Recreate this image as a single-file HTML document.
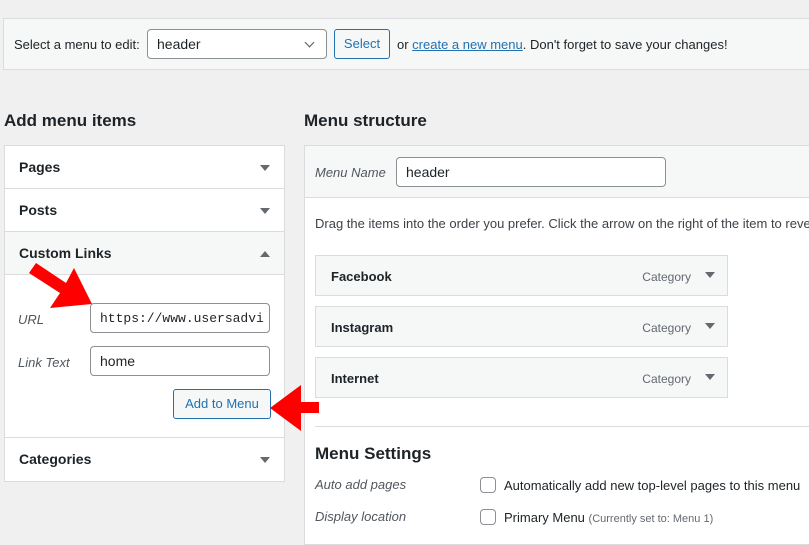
<!DOCTYPE html>
<html><head><style>
*{box-sizing:border-box;margin:0;padding:0}
body{width:809px;height:531px;background:#f0f0f1;font-family:"Liberation Sans",sans-serif;font-size:13px;color:#1d2327;position:relative;overflow:hidden}
.a{position:absolute}
.inp{position:absolute;background:#fff;border:1px solid #8c8f94;border-radius:4px;font-size:14px;padding-left:9px;display:flex;align-items:center}
.tri{position:absolute;width:0;height:0;border-left:5px solid transparent;border-right:5px solid transparent;border-top:6px solid #646970}
.row{position:absolute;left:0;width:279px;height:43px;border-bottom:1px solid #dcdcde;font-size:14px;font-weight:bold;padding:13px 14px}
.item{position:absolute;left:315px;width:413px;height:41px;background:#f6f7f7;border:1px solid #dcdcde;font-weight:bold;font-size:13px;padding:13px 15px}
.item span{position:absolute;right:36px;top:14px;font-weight:normal;color:#646970;font-size:12px}
.item i{position:absolute;right:12px;top:16px;border-left:5px solid transparent;border-right:5px solid transparent;border-top:6px solid #646970}
</style></head><body>
<div class="a" style="left:3px;top:18px;width:820px;height:52px;background:#f6f7f7;border:1px solid #dcdcde"></div>
<div class="a" style="left:14px;top:37px">Select a menu to edit:</div>
<div class="inp" style="left:147px;top:29px;width:180px;height:30px;">header</div>
<div class="a" style="left:306px;top:39px;width:7px;height:7px;border-right:1.5px solid #50575e;border-bottom:1.5px solid #50575e;transform:rotate(45deg)"></div>
<div class="a" style="left:334px;top:29px;width:56px;height:30px;border:1px solid #2271b1;border-radius:3px;background:#f6f7f7;color:#2271b1;text-align:center;line-height:28px">Select</div>
<div class="a" style="left:397px;top:37px">or <u style="color:#2271b1">create a new menu</u>. Don't forget to save your changes!</div>

<div class="a" style="left:4px;top:111px;font-size:17px;font-weight:bold">Add menu items</div>
<div class="a" style="left:304px;top:111px;font-size:17px;font-weight:bold">Menu structure</div>

<div class="a" style="left:4px;top:145px;width:281px;height:337px;background:#fff;border:1px solid #dcdcde">
 <div class="row" style="top:0">Pages<div class="tri" style="right:14px;top:19px"></div></div>
 <div class="row" style="top:43px">Posts<div class="tri" style="right:14px;top:19px"></div></div>
 <div class="row" style="top:86px;background:#f6f7f7">Custom Links<div class="tri" style="right:14px;top:19px;border-top:none;border-bottom:6px solid #646970"></div></div>
 <div class="row" style="top:291px;border-top:1px solid #dcdcde;border-bottom:none">Categories<div class="tri" style="right:14px;top:19px"></div></div>
</div>
<div class="a" style="left:18px;top:312px;font-style:italic;color:#50575e">URL</div>
<div class="inp" style="left:90px;top:303px;width:180px;height:30px;font-family:'Liberation Mono',monospace;font-size:13px">https://www.usersadvi</div>
<div class="a" style="left:18px;top:355px;font-style:italic;color:#50575e">Link Text</div>
<div class="inp" style="left:90px;top:346px;width:180px;height:30px">home</div>
<div class="a" style="left:173px;top:389px;width:98px;height:30px;border:1px solid #2271b1;border-radius:3px;background:#f6f7f7;color:#2271b1;text-align:center;line-height:28px">Add to Menu</div>

<div class="a" style="left:304px;top:145px;width:520px;height:400px;background:#fff;border:1px solid #dcdcde"></div>
<div class="a" style="left:305px;top:146px;width:520px;height:52px;background:#f6f7f7;border-bottom:1px solid #dcdcde"></div>
<div class="a" style="left:315px;top:165px;font-style:italic;color:#50575e">Menu Name</div>
<div class="inp" style="left:396px;top:157px;width:270px;height:30px">header</div>
<div class="a" style="left:315px;top:216px;white-space:nowrap;color:#3c434a">Drag the items into the order you prefer. Click the arrow on the right of the item to reveal</div>
<div class="item" style="top:255px">Facebook<span>Category</span><i></i></div>
<div class="item" style="top:306px">Instagram<span>Category</span><i></i></div>
<div class="item" style="top:357px">Internet<span>Category</span><i></i></div>
<div class="a" style="left:315px;top:426px;width:500px;border-top:1px solid #dcdcde"></div>
<div class="a" style="left:315px;top:444px;font-size:17px;font-weight:bold">Menu Settings</div>
<div class="a" style="left:315px;top:477px;font-style:italic;color:#50575e">Auto add pages</div>
<div class="a" style="left:315px;top:509px;font-style:italic;color:#50575e">Display location</div>
<div class="a" style="left:480px;top:477px;width:16px;height:16px;border:1px solid #8c8f94;border-radius:4px;background:#fff"></div>
<div class="a" style="left:480px;top:509px;width:16px;height:16px;border:1px solid #8c8f94;border-radius:4px;background:#fff"></div>
<div class="a" style="left:504px;top:478px;white-space:nowrap">Automatically add new top-level pages to this menu</div>
<div class="a" style="left:504px;top:510px;white-space:nowrap">Primary Menu <span style="font-size:11px;color:#646970">(Currently set to: Menu 1)</span></div>

<svg class="a" style="left:0;top:0" width="809" height="531">
<polygon fill="#f00" points="29,273 36,263 66,283 74,268 92,304 50,308 60,293"/>
<polygon fill="#f00" points="270,408 301,385 301,402 319,402 319,413 301,413 301,431"/>
</svg>
</body></html>
